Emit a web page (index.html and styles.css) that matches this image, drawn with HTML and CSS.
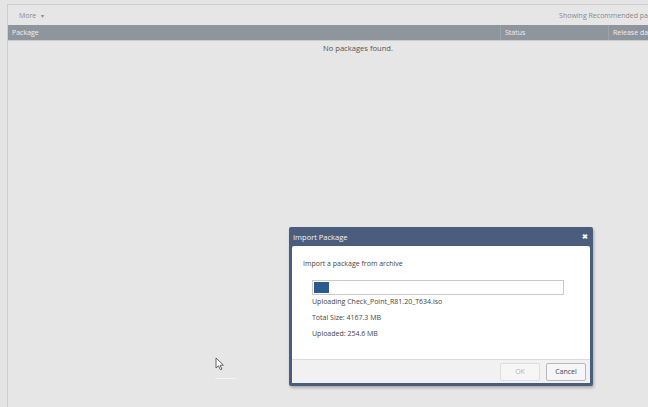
FILE: index.html
```html
<!DOCTYPE html>
<html lang="en">
<head>
<meta charset="UTF-8">
<title>Packages</title>
<link rel="stylesheet" href="styles.css">
</head>
<body>
<div class="panel">
  <div class="toolbar">
    <span class="more">More <span class="caret">&#9662;</span></span>
    <span class="showing">Showing Recommended packages</span>
  </div>
  <div class="grid-head">
    <div class="col col-package">Package</div>
    <div class="col col-status">Status</div>
    <div class="col col-date">Release date</div>
  </div>
  <div class="empty">No packages found.</div>
</div>

<div class="dialog">
  <div class="dialog-title">
    <span>Import Package</span>
    <span class="close">&#10006;</span>
  </div>
  <div class="dialog-body">
    <p class="intro">Import a package from archive</p>
    <div class="upload">
      <div class="progress"><div class="progress-fill" style="width: 6%"></div></div>
      <p>Uploading Check_Point_R81.20_T634.iso</p>
      <p>Total Size: 4167.3 MB</p>
      <p>Uploaded: 254.6 MB</p>
    </div>
  </div>
  <div class="dialog-footer">
    <button class="btn btn-disabled">OK</button>
    <button class="btn">Cancel</button>
  </div>
</div>

<div class="cursor">
  <svg width="10" height="14" viewBox="0 0 10 14">
    <path d="M1 1 L1 11 L3.5 8.8 L5.4 12.8 L6.9 12.1 L5.1 8.3 L8.4 8.1 Z" fill="#fff" stroke="#555" stroke-width="0.9" stroke-linejoin="round"/>
  </svg>
</div>
<div class="cursor-line"></div>
</body>
</html>
```

FILE: styles.css
```css
body {
  margin: 0;
  padding: 4px 0 0 7px;
  background: #e4e4e4;
  font-family: "Open Sans", "Noto Sans", sans-serif;
  font-size: 7px;
  color: #4a4a4a;
  overflow: hidden;
  height: 407px;
  box-sizing: border-box;
}
.panel {
  width: 672px;
  height: 410px;
  border-top: 1px solid #cdcdcd;
  border-left: 1px solid #cdcdcd;
  background: #e6e6e6;
}
.toolbar {
  display: flex;
  justify-content: space-between;
  align-items: center;
  height: 20px;
  padding: 0 10px;
  color: #8a8a8a;
}
.more {
  padding-left: 1px;
}
.caret {
  font-size: 6px;
  margin-left: 3px;
}
.grid-head {
  display: grid;
  grid-template-columns: 492px 108px 1fr;
  height: 15px;
  background: #8e959c;
  border-bottom: 1px solid #c9cbcd;
  color: #eef0f2;
}
.col {
  display: flex;
  align-items: center;
  padding-left: 4px;
}
.col + .col {
  border-left: 1px solid #9da3a9;
}
.empty {
  width: 700px;
  text-align: center;
  padding-top: 2px;
  font-size: 7.6px;
  color: #555;
}

.dialog {
  position: absolute;
  left: 289px;
  top: 227px;
  width: 304px;
  height: 159px;
  box-sizing: border-box;
  background: #4b5d7c;
  border-radius: 2px;
  padding: 0 3px 3px 3px;
  display: flex;
  flex-direction: column;
  box-shadow: 1px 2px 3px rgba(0, 0, 0, 0.25);
}
.dialog-title {
  display: flex;
  justify-content: space-between;
  align-items: center;
  height: 19px;
  padding: 0 2px 0 1px;
  color: #f2f4f8;
  font-size: 7.5px;
}
.close {
  font-size: 7px;
  font-weight: bold;
}
.dialog-body {
  flex: 1;
  background: #fff;
  padding: 13px 11px 0 11px;
  border-radius: 2px 2px 0 0;
  color: #444;
}
.dialog-body p {
  margin: 0;
}
.intro {
  margin-bottom: 12px !important;
}
.upload {
  padding-left: 9px;
}
.upload p {
  margin-bottom: 7px !important;
}
.progress {
  width: 248px;
  height: 11px;
  border: 1px solid #c9c9c9;
  padding: 1px;
  margin-bottom: 2px;
  background: #fff;
}
.progress-fill {
  height: 100%;
  background: #2c5a8f;
}
.dialog-footer {
  display: flex;
  justify-content: flex-end;
  align-items: center;
  gap: 6px;
  height: 23px;
  padding-right: 4px;
  background: #f1f1f1;
  border-top: 1px solid #dcdcdc;
}
.btn {
  width: 40px;
  height: 18px;
  border: 1px solid #b8b8b8;
  border-radius: 2px;
  background: #f6f6f6;
  font-family: inherit;
  font-size: 7px;
  color: #444;
  padding: 0;
}
.btn-disabled {
  color: #b5b5b5;
  border-color: #dedede;
}

.cursor {
  position: absolute;
  left: 215px;
  top: 357px;
}
.cursor-line {
  position: absolute;
  left: 215px;
  top: 378px;
  width: 21px;
  height: 1px;
  background: #f4f4f4;
}
```
